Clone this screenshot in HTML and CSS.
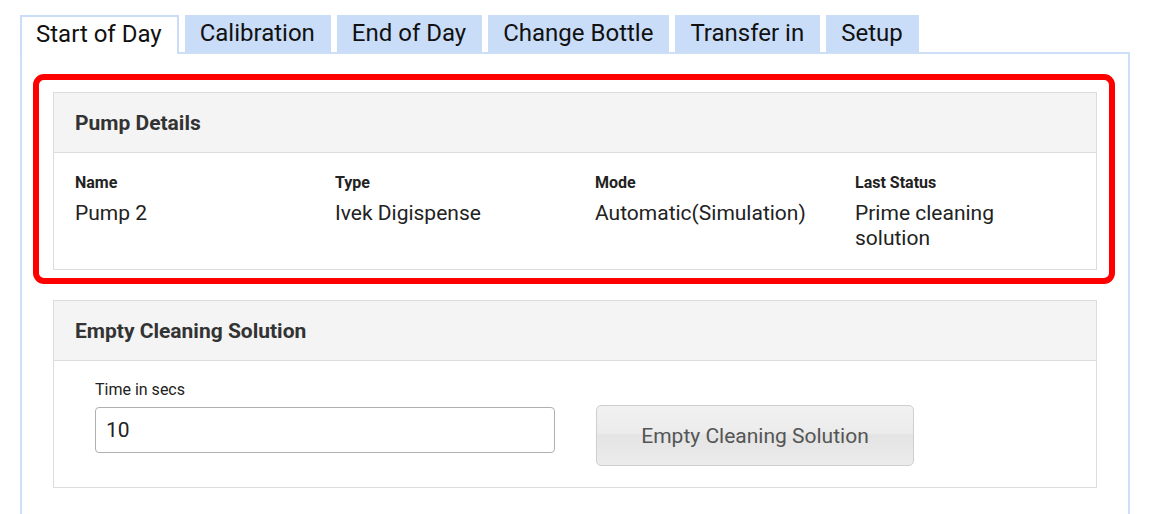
FILE: index.html
```html
<!DOCTYPE html>
<html>
<head>
<meta charset="utf-8">
<link rel="stylesheet" href="styles.css">
</head>
<body>
<div class="page">
  <ul class="tabs">
    <li class="tab active">Start of Day</li>
    <li class="tab">Calibration</li>
    <li class="tab">End of Day</li>
    <li class="tab">Change Bottle</li>
    <li class="tab">Transfer in</li>
    <li class="tab">Setup</li>
  </ul>
  <div class="panel">
    <div class="highlight">
      <div class="card">
        <div class="card-header">Pump Details</div>
        <div class="details">
          <div class="detail">
            <div class="label">Name</div>
            <div class="value">Pump 2</div>
          </div>
          <div class="detail">
            <div class="label">Type</div>
            <div class="value">Ivek Digispense</div>
          </div>
          <div class="detail">
            <div class="label">Mode</div>
            <div class="value">Automatic(Simulation)</div>
          </div>
          <div class="detail last">
            <div class="label">Last Status</div>
            <div class="value">Prime cleaning solution</div>
          </div>
        </div>
      </div>
    </div>
    <div class="card card-second">
      <div class="card-header">Empty Cleaning Solution</div>
      <div class="form-body">
        <div class="field">
          <label class="field-label" for="secs">Time in secs</label>
          <input class="field-input" id="secs" type="text" value="10">
        </div>
        <button class="action-btn" type="button">Empty Cleaning Solution</button>
      </div>
    </div>
  </div>
</div>
</body>
</html>
```

FILE: styles.css
```css
* { box-sizing: border-box; }
html, body { margin: 0; padding: 0; background: #fff; }
body {
  font-family: Roboto, "Liberation Sans", Arial, sans-serif;
  color: #222;
}
.page { padding: 15px 0 0 20px; width: 1130px; }
.tabs {
  list-style: none;
  margin: 0;
  padding: 0;
  display: flex;
  gap: 6px;
  position: relative;
  z-index: 1;
}
.tab {
  height: 37px;
  line-height: 36px;
  padding: 0 16px 0 15px;
  font-size: 24px;
  color: #111;
  background: #c9ddf9;
}
.tab.active {
  background: #fff;
  border: 2px solid #c9ddf9;
  border-bottom: none;
  height: 39px;
  line-height: 34px;
  margin-bottom: -2px;
  padding: 0 15px 0 14px;
}
.panel {
  border: 2px solid #cddff7;
  padding: 20px 13px 30px 11px;
  width: 1110px;
  height: 480px;
}
.highlight {
  border: 6px solid #fe0000;
  border-radius: 11px;
  padding: 12px 12px 8px 14px;
}
.card {
  border: 1px solid #dcdcdc;
  background: #fff;
}
.card-header {
  background: #f4f4f4;
  border-bottom: 1px solid #dcdcdc;
  height: 60px;
  line-height: 60px;
  padding-left: 21px;
  font-size: 21px;
  font-weight: bold;
  color: #333;
}
.details {
  display: grid;
  grid-template-columns: 260px 260px 260px 1fr;
  padding: 20px 0 18px 21px;
}
.detail { padding-right: 30px; }
.label {
  font-size: 16px;
  font-weight: bold;
  line-height: 19px;
  color: #222;
}
.value {
  margin-top: 9px;
  font-size: 21px;
  line-height: 25px;
  color: #222;
}
.card-second {
  margin: 16px 18px 0 20px;
}
.form-body {
  display: flex;
  align-items: flex-start;
  padding: 19px 0 21px 41px;
}
.field {
  width: 460px;
  display: flex;
  flex-direction: column;
}
.field-label {
  font-size: 16px;
  line-height: 19px;
  color: #222;
}
.field-input {
  margin-top: 8px;
  height: 46px;
  border: 1px solid #b0b0b0;
  border-radius: 4px;
  padding: 0 10px;
  font-family: inherit;
  font-size: 21px;
  color: #222;
  background: #fff;
}
.action-btn {
  margin: 25px 0 0 41px;
  width: 318px;
  height: 61px;
  border: 1px solid #cfcfcf;
  border-radius: 5px;
  background: linear-gradient(#f1f1f1 0%, #ececec 45%, #e4e4e4 50%, #ececec 100%);
  font-family: inherit;
  font-size: 21px;
  color: #555;
}
```
